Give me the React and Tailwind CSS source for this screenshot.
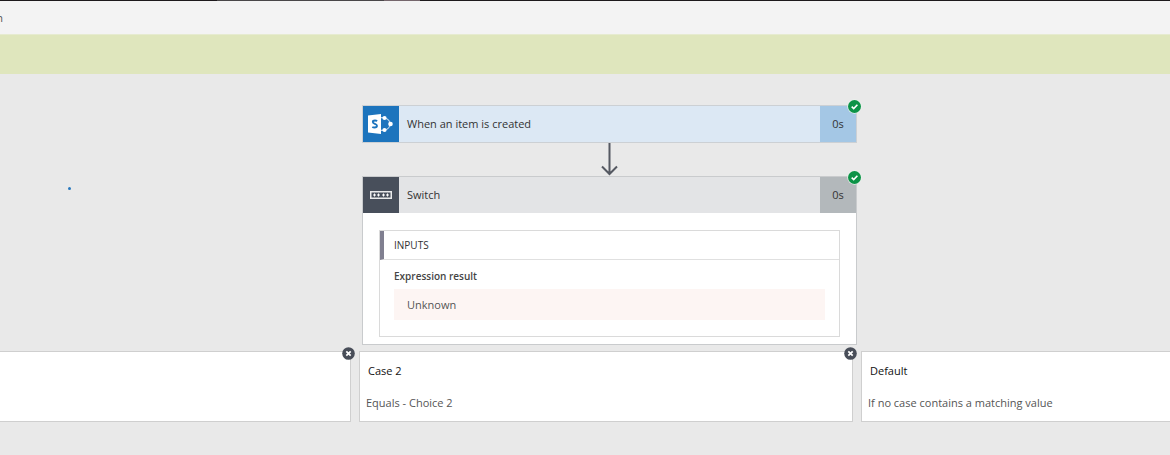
import React from 'react';

const SharePointIcon = () => (
  <svg width="26" height="20" viewBox="0 0 26 20" aria-hidden="true">
    <path d="M13 3.700h3.500q5 1.500 6 6.300-1 4.800-6 6.300H13" fill="none" stroke="#b9d5ec" strokeWidth="1.2" />
    <circle cx="16.5" cy="4" r="2.1" fill="#fff" />
    <circle cx="22.5" cy="10" r="2.3" fill="#fff" />
    <circle cx="16.5" cy="16" r="2.1" fill="#fff" />
    <path d="M0 1.500 13 0v20L0 18.500z" fill="#fff" />
    <path
      d="M9.200 7C8.500 6.600 7.800 6.500 7 6.500 5.700 6.500 4.800 7 4.800 7.900c0 2.100 4.200 1.700 4.200 3.900 0 1.100-1 1.700-2.500 1.700-.9 0-1.600-.2-2.200-.6"
      fill="none"
      stroke="#1c74bd"
      strokeWidth="1.8"
    />
  </svg>
);

const SwitchIcon = () => (
  <svg width="22" height="8" viewBox="0 0 22 8" aria-hidden="true">
    <rect x="0.75" y="0.75" width="20.5" height="6.5" fill="#484f5b" stroke="#e9eaeb" strokeWidth="1.5" />
    <path
      d="M3 4h3M7 4h3M12 4h3M16 4h3M4.500 2.500v3M8.500 2.500v3M13.500 2.500v3M17.500 2.500v3"
      fill="none"
      stroke="#fff"
    />
  </svg>
);

const SuccessBadge = () => (
  <svg
    className="absolute -top-[7px] -right-[6px]"
    width="15"
    height="15"
    viewBox="0 0 15 15"
    role="img"
    aria-label="Succeeded"
  >
    <circle cx="7.5" cy="7.5" r="7.2" fill="#e9f3ec" />
    <circle cx="7.5" cy="7.5" r="6.5" fill="#0c9347" />
    <path d="M4.700 7.600l2 2 3.700-3.900" fill="none" stroke="#fff" strokeWidth="1.6" />
  </svg>
);

const SkippedBadge = () => (
  <svg
    className="absolute -top-[5px] -right-[5px]"
    width="13"
    height="13"
    viewBox="0 0 13 13"
    role="img"
    aria-label="Skipped"
  >
    <circle cx="6.5" cy="6.5" r="6.3" fill="#484d58" />
    <path d="M4.300 4.300l4.400 4.400M8.700 4.300l-4.400 4.400" fill="none" stroke="#fff" strokeWidth="1.7" />
  </svg>
);

const StepHeader = ({ icon, title, time, iconClass, titleClass, timeClass }) => (
  <button type="button" className="flex h-9 w-full text-left text-[#333]">
    <span className={`flex w-9 shrink-0 items-center justify-center ${iconClass}`}>{icon}</span>
    <span className={`flex flex-1 items-center pt-px pl-2 ${titleClass}`}>{title}</span>
    <span className={`flex w-9 shrink-0 items-center justify-center pt-px ${timeClass}`}>{time}</span>
  </button>
);

const CaseCard = ({ title, description, skipped, className }) => (
  <section className={`relative h-[71px] border border-[#cfcfcf] bg-white ${className}`}>
    <h2 className="mt-[11px] ml-2 h-4 leading-4 text-[#111]">{title}</h2>
    <p className="mt-4 ml-[6px] h-4 leading-4 text-[#555]">{description}</p>
    {skipped && <SkippedBadge />}
  </section>
);

const App = () => {
  return (
    <div className="min-h-screen overflow-hidden bg-[#e9e9e9] font-['Open_Sans','Noto_Sans',sans-serif] text-[11px]">
      <div className="flex h-px bg-[#1d191c]">
        <div className="ml-[217px] w-[167px] bg-[#494648]" />
        <div className="w-9 bg-[#75666c]" />
      </div>
      <header className="flex h-[33px] items-center bg-[#f3f3f3] pt-px text-[#555]">
        <span className="flex w-[3px] justify-end">n</span>
      </header>
      <div className="h-10 border-t border-[#e6ebd0] bg-[#dfe6bd]" />

      <main className="pt-[31px]">
        <div className="grid grid-cols-[362fr_495px_313fr]">
          <div className="flex">
            <span className="mt-[82px] ml-[68px] h-[3px] w-[3px] rounded-full bg-[#2878be]" />
          </div>
          <div>
            <section className="relative border border-[#ccd0d4]">
              <StepHeader
                icon={<SharePointIcon />}
                title="When an item is created"
                time="0s"
                iconClass="bg-[#1c74bd]"
                titleClass="bg-[#dce8f4]"
                timeClass="bg-[#a4c7e5]"
              />
              <SuccessBadge />
            </section>

            <div className="flex h-[33px] justify-center">
              <svg width="19" height="33" viewBox="0 0 19 33" aria-hidden="true">
                <path d="M9.500 0v31M2 23.500l7.500 7.500 7.500-7.500" fill="none" stroke="#555962" strokeWidth="2" />
              </svg>
            </div>

            <section className="relative border border-[#c9cbcd] bg-white">
              <StepHeader
                icon={<SwitchIcon />}
                title="Switch"
                time="0s"
                iconClass="bg-[#484f5b]"
                titleClass="bg-[#e3e4e6]"
                timeClass="bg-[#b3b8bb]"
              />
              <SuccessBadge />
              <div className="mx-4 mt-[17px] mb-[7px] border border-[#dadada] pb-4">
                <h2 className="flex h-[29px] items-center border-b border-l-4 border-b-[#e0e0e0] border-l-[#807f90] pl-[10px] text-[10px] text-[#333]">
                  INPUTS
                </h2>
                <div className="px-[14px] pt-2">
                  <h3 className="h-4 text-[10px] leading-4 font-semibold text-[#444]">Expression result</h3>
                  <p className="mt-[5px] flex h-[31px] items-center bg-[#fdf5f3] pt-px pl-[13px] text-[#555]">
                    Unknown
                  </p>
                </div>
              </div>
            </section>
          </div>
        </div>

        <div className="mt-[6px] grid grid-cols-[351fr_494px_309fr] gap-2">
          <CaseCard skipped className="border-l-0" />
          <CaseCard title="Case 2" description="Equals - Choice 2" skipped />
          <CaseCard title="Default" description="If no case contains a matching value" className="border-r-0" />
        </div>
      </main>
    </div>
  );
};

export default App;
